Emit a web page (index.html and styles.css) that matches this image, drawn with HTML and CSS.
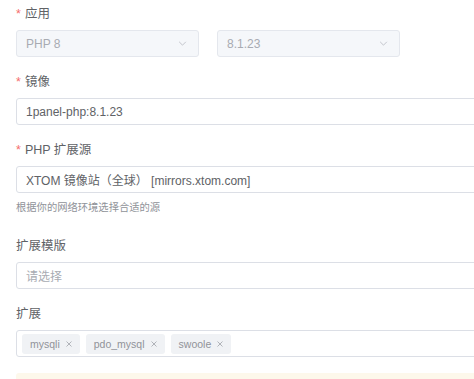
FILE: index.html
```html
<!DOCTYPE html>
<html lang="zh-CN">
<head>
    <meta charset="UTF-8">
    <meta name="viewport" content="width=device-width, initial-scale=1.0">
    <title>PHP 运行环境</title>
    <link rel="stylesheet" href="styles.css">
</head>
<body>
    <form class="runtime-form">
        <div class="form-item">
            <label class="form-label required">应用</label>
            <div class="select-row">
                <div class="select is-disabled">
                    <span>PHP 8</span>
                    <svg class="arrow" viewBox="0 0 10 6" width="9" height="5"><path d="M1 1l4 4 4-4" fill="none" stroke="currentColor" stroke-width="1"/></svg>
                </div>
                <div class="select is-disabled">
                    <span>8.1.23</span>
                    <svg class="arrow" viewBox="0 0 10 6" width="9" height="5"><path d="M1 1l4 4 4-4" fill="none" stroke="currentColor" stroke-width="1"/></svg>
                </div>
            </div>
        </div>

        <div class="form-item">
            <label class="form-label required">镜像</label>
            <div class="input">1panel-php:8.1.23</div>
        </div>

        <div class="form-item">
            <label class="form-label required">PHP 扩展源</label>
            <div class="input">XTOM 镜像站（全球） [mirrors.xtom.com]</div>
            <span class="input-help">根据你的网络环境选择合适的源</span>
        </div>

        <div class="form-item">
            <label class="form-label">扩展模版</label>
            <div class="input placeholder">请选择</div>
        </div>

        <div class="form-item">
            <label class="form-label">扩展</label>
            <div class="input tags-input">
                <span class="tag">mysqli <svg class="tag-close" viewBox="0 0 6 6" width="6" height="6"><path d="M0.5 0.5l5 5M5.5 0.5l-5 5" stroke="currentColor" stroke-width="0.9"/></svg></span>
                <span class="tag">pdo_mysql <svg class="tag-close" viewBox="0 0 6 6" width="6" height="6"><path d="M0.5 0.5l5 5M5.5 0.5l-5 5" stroke="currentColor" stroke-width="0.9"/></svg></span>
                <span class="tag">swoole <svg class="tag-close" viewBox="0 0 6 6" width="6" height="6"><path d="M0.5 0.5l5 5M5.5 0.5l-5 5" stroke="currentColor" stroke-width="0.9"/></svg></span>
            </div>
        </div>

        <div class="alert-warning"></div>
    </form>
</body>
</html>
```

FILE: styles.css
```css
body {
    margin: 0;
    overflow: hidden;
    font-family: "Liberation Sans", "Noto Sans CJK SC", sans-serif;
    color: #606266;
    background: #fff;
}
.runtime-form {
    width: 520px;
    padding: 5px 0 0 16px;
}
.form-item {
    margin-bottom: 16px;
}
.form-label {
    display: block;
    font-size: 12.5px;
    line-height: 18px;
    margin-bottom: 7px;
    color: #606266;
}
.form-label.required::before {
    content: "*";
    color: #f56c6c;
    margin-right: 4px;
}
.select-row {
    display: flex;
    gap: 18px;
}
.select,
.input {
    box-sizing: border-box;
    height: 27px;
    border: 1px solid #dcdfe6;
    border-radius: 3px;
    padding: 0 11px 0 9px;
    display: flex;
    align-items: center;
    font-size: 12px;
    color: #606266;
}
.select {
    width: 183px;
    justify-content: space-between;
}
.select.is-disabled {
    background: #f5f7fa;
    border-color: #e4e7ed;
    color: #a8abb2;
}
.arrow {
    color: #b8bbc2;
}
.input.placeholder {
    color: #a8abb2;
}
.input-help {
    display: block;
    margin-top: 8px;
    margin-bottom: 23px;
    font-size: 10.3px;
    line-height: 13px;
    color: #909399;
}
.tags-input {
    padding-left: 5px;
    gap: 6px;
}
.tag {
    display: inline-flex;
    align-items: center;
    height: 20px;
    padding: 0 8px;
    gap: 6px;
    border-radius: 3px;
    background: #f0f2f5;
    color: #909399;
    font-size: 10.5px;
}
.tag-close {
    color: #a8abb2;
}
.alert-warning {
    height: 30px;
    background: #fdf8eb;
    border-radius: 3px;
}
```
